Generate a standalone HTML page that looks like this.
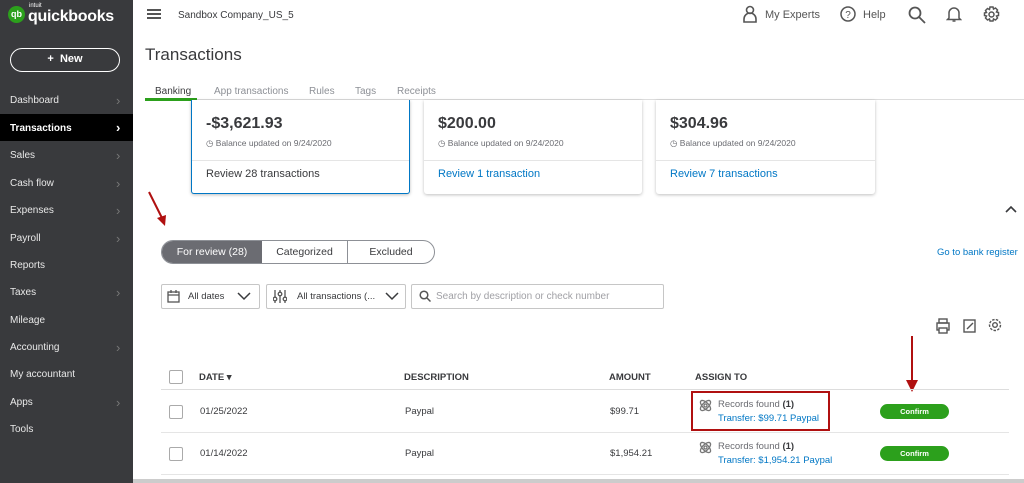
<!DOCTYPE html>
<html><head><style>
*{box-sizing:border-box;margin:0;padding:0}
body{width:1024px;height:483px;overflow:hidden;font-family:"Liberation Sans",sans-serif;background:#fff;position:relative;color:#393a3d}
.a{position:absolute}
.sb{left:0;top:0;width:133px;height:483px;background:#393a3d}
.nav{position:absolute;left:10px;font-size:10px;color:#e8e8e8}
.chev{position:absolute;left:116px;font-size:13px;color:#777;line-height:12px}
.card{position:absolute;top:100px;height:94px;background:#fff;box-shadow:0 1px 3px rgba(0,0,0,.25);border-radius:0 0 3px 3px}
.amt{position:absolute;left:14px;top:15px;font-size:16px;font-weight:bold;color:#393a3d}
.bal{position:absolute;left:14px;top:38px;font-size:8.5px;color:#6b6c72}
.rv{position:absolute;left:14px;top:68px;font-size:11px;color:#0077c5}
.dv{position:absolute;left:0;right:0;top:60px;border-top:1px solid #e5e5e5}
.th{position:absolute;top:372px;font-size:9.5px;font-weight:bold;color:#393a3d}
.cell{position:absolute;font-size:9.5px;color:#393a3d}
.cb{position:absolute;left:169px;width:14px;height:14px;border:1px solid #aaa;border-radius:2px}
.btn{position:absolute;left:880px;width:69px;height:15px;background:#2ca01c;border-radius:8px;color:#fff;font-size:7.5px;font-weight:bold;text-align:center;line-height:15px}
.lnk{color:#0077c5}
.tab{position:absolute;top:86px;font-size:10px;color:#8d9096}
</style></head><body>
<div class="a sb"></div>
<div class="a" style="left:8px;top:6px;width:17px;height:17px;border-radius:50%;background:#2ca01c;color:#fff;font-size:9px;font-weight:bold;text-align:center;line-height:17px">qb</div>
<div class="a" style="left:29px;top:3px;font-size:6px;color:#fff">intuit</div>
<div class="a" style="left:28px;top:8px;font-size:16px;font-weight:bold;color:#fff;letter-spacing:-.3px">quickbooks</div>
<div class="a" style="left:10px;top:48px;width:110px;height:24px;border:1.5px solid #fff;border-radius:12px;color:#fff;font-size:11px;font-weight:bold;text-align:center;line-height:21px">+&nbsp; New</div>
<div class="a" style="left:0;top:114px;width:133px;height:27px;background:#000"></div>
<div class="nav" style="top:95px">Dashboard</div><div class="chev" style="top:95px">›</div>
<div class="nav" style="top:123px;color:#fff;font-weight:bold">Transactions</div><div class="chev" style="top:122px;color:#fff;font-weight:bold">›</div>
<div class="nav" style="top:150px">Sales</div><div class="chev" style="top:150px">›</div>
<div class="nav" style="top:178px">Cash flow</div><div class="chev" style="top:178px">›</div>
<div class="nav" style="top:205px">Expenses</div><div class="chev" style="top:205px">›</div>
<div class="nav" style="top:233px">Payroll</div><div class="chev" style="top:233px">›</div>
<div class="nav" style="top:260px">Reports</div>
<div class="nav" style="top:287px">Taxes</div><div class="chev" style="top:287px">›</div>
<div class="nav" style="top:315px">Mileage</div>
<div class="nav" style="top:342px">Accounting</div><div class="chev" style="top:342px">›</div>
<div class="nav" style="top:369px">My accountant</div>
<div class="nav" style="top:397px">Apps</div><div class="chev" style="top:397px">›</div>
<div class="nav" style="top:424px">Tools</div>

<div class="a" style="left:147px;top:9px;width:14px;height:2px;background:#555;box-shadow:0 4px 0 #555,0 8px 0 #555"></div>
<div class="a" style="left:178px;top:10px;font-size:10px;color:#393a3d">Sandbox Company_US_5</div>
<svg class="a" style="left:742px;top:5px" width="16" height="18" viewBox="0 0 16 18" fill="none" stroke="#555" stroke-width="1.6"><circle cx="8" cy="5" r="3.5"/><path d="M2 17v-3a6 6 0 0 1 12 0v3z"/></svg>
<div class="a" style="left:765px;top:9px;font-size:11px;color:#555">My Experts</div>
<svg class="a" style="left:840px;top:6px" width="16" height="16" viewBox="0 0 16 16"><circle cx="8" cy="8" r="7" fill="none" stroke="#555" stroke-width="1.5"/><text x="8" y="12" font-size="10" text-anchor="middle" fill="#555" font-family="Liberation Sans">?</text></svg>
<div class="a" style="left:863px;top:9px;font-size:11px;color:#555">Help</div>
<svg class="a" style="left:908px;top:6px" width="18" height="18" viewBox="0 0 18 18" fill="none" stroke="#555" stroke-width="1.8"><circle cx="7" cy="7" r="5.5"/><path d="M11 11l6 6"/></svg>
<svg class="a" style="left:946px;top:5px" width="16" height="18" viewBox="0 0 16 18" fill="none" stroke="#555" stroke-width="1.5"><path d="M3 13V8a5 5 0 0 1 10 0v5l1.5 1.5h-13z"/><path d="M6.5 16h3"/></svg>
<svg class="a" style="left:983px;top:6px" width="17" height="17" viewBox="0 0 17 17" fill="none" stroke="#555" stroke-width="1.5"><circle cx="8.5" cy="8.5" r="2.5"/><path d="M7 1h3l.5 2 2-1 2 2-1 2 2 .5v3l-2 .5 1 2-2 2-2-1-.5 2H7l-.5-2-2 1-2-2 1-2-2-.5V7l2-.5-1-2 2-2 2 1z"/></svg>

<div class="a" style="left:145px;top:45px;font-size:17px;color:#393a3d">Transactions</div>
<div class="tab" style="left:155px;color:#393a3d">Banking</div>
<div class="tab" style="left:214px">App transactions</div>
<div class="tab" style="left:309px">Rules</div>
<div class="tab" style="left:355px">Tags</div>
<div class="tab" style="left:397px">Receipts</div>
<div class="a" style="left:145px;top:99px;width:879px;height:1px;background:#ddd"></div>
<div class="a" style="left:145px;top:98px;width:52px;height:3px;background:#2ca01c"></div>

<div class="card" style="left:191px;width:219px;border:1px solid #0077c5;border-top:none"><div class="amt">-$3,621.93</div><div class="bal">◷ Balance updated on 9/24/2020</div><div class="dv"></div><div class="rv" style="color:#393a3d">Review 28 transactions</div></div>
<div class="card" style="left:424px;width:218px"><div class="amt">$200.00</div><div class="bal">◷ Balance updated on 9/24/2020</div><div class="dv"></div><div class="rv">Review 1 transaction</div></div>
<div class="card" style="left:656px;width:219px"><div class="amt">$304.96</div><div class="bal">◷ Balance updated on 9/24/2020</div><div class="dv"></div><div class="rv">Review 7 transactions</div></div>
<svg class="a" style="left:1004px;top:204px" width="14" height="10" fill="none" stroke="#393a3d" stroke-width="1.6"><path d="M2 8l5-5 5 5"/></svg>

<svg class="a" style="left:146px;top:190px" width="24" height="44"><path d="M3 2L17 30" stroke="#b01010" stroke-width="2"/><path d="M11 28l8 8 1-11z" fill="#b01010"/></svg>
<div class="a" style="left:161px;top:240px;width:274px;height:24px;border:1px solid #8d9096;border-radius:12px;overflow:hidden;background:#fff">
<div class="a" style="left:0;top:0;width:100px;height:22px;background:#6b6c72;color:#fff;font-size:10.5px;text-align:center;line-height:22px">For review (28)</div>
<div class="a" style="left:100px;top:0;width:86px;height:22px;border-right:1px solid #8d9096;font-size:10.5px;text-align:center;line-height:22px">Categorized</div>
<div class="a" style="left:186px;top:0;width:86px;height:22px;font-size:10.5px;text-align:center;line-height:22px">Excluded</div></div>
<div class="a" style="left:937px;top:247px;font-size:9.5px;color:#0077c5">Go to bank register</div>

<div class="a" style="left:161px;top:284px;width:99px;height:25px;border:1px solid #c6c6c6;border-radius:2px;font-size:9.5px;line-height:23px;padding-left:26px">All dates</div>
<svg class="a" style="left:237px;top:292px" width="14" height="9" fill="none" stroke="#393a3d" stroke-width="1.5"><path d="M1 1l6 6 6-6"/></svg>
<svg class="a" style="left:167px;top:290px" width="13" height="13" fill="none" stroke="#555" stroke-width="1.3"><rect x="1" y="2" width="11" height="10"/><path d="M1 5h11M4 0v3M9 0v3"/></svg>
<div class="a" style="left:266px;top:284px;width:140px;height:25px;border:1px solid #c6c6c6;border-radius:2px;font-size:9.5px;line-height:23px;padding-left:30px">All transactions (...</div>
<svg class="a" style="left:385px;top:292px" width="14" height="9" fill="none" stroke="#393a3d" stroke-width="1.5"><path d="M1 1l6 6 6-6"/></svg>
<svg class="a" style="left:273px;top:290px" width="14" height="13" stroke="#555" stroke-width="1.3" fill="#fff"><path d="M2 0v13M7 0v13M12 0v13"/><circle cx="2" cy="9" r="1.8"/><circle cx="7" cy="4" r="1.8"/><circle cx="12" cy="9" r="1.8"/></svg>
<div class="a" style="left:411px;top:284px;width:253px;height:25px;border:1px solid #c6c6c6;border-radius:2px;font-size:10px;line-height:23px;padding-left:24px;color:#a0a0a5">Search by description or check number</div>
<svg class="a" style="left:419px;top:290px" width="12" height="12" fill="none" stroke="#555" stroke-width="1.5"><circle cx="5" cy="5" r="3.8"/><path d="M8 8l3.5 3.5"/></svg>

<svg class="a" style="left:934px;top:318px" width="70" height="16" fill="none" stroke="#555" stroke-width="1.4"><rect x="3" y="5" width="12" height="7"/><rect x="5" y="1" width="8" height="4"/><rect x="5" y="10" width="8" height="5" fill="#fff"/><rect x="30" y="2" width="11" height="12"/><path d="M33 11l6-6"/><circle cx="61" cy="7" r="2.3"/><circle cx="61" cy="7" r="5.5" stroke-dasharray="2.5 1.3"/></svg>

<svg class="a" style="left:902px;top:336px" width="20" height="60"><path d="M10 0v46" stroke="#b01010" stroke-width="2"/><path d="M4 44h12l-6 12z" fill="#b01010"/></svg>

<div class="cb" style="top:370px"></div>
<div class="th" style="left:199px">DATE ▾</div>
<div class="th" style="left:404px">DESCRIPTION</div>
<div class="th" style="left:609px">AMOUNT</div>
<div class="th" style="left:695px">ASSIGN TO</div>
<div class="a" style="left:161px;top:389px;width:848px;height:1px;background:#ddd"></div>

<div class="cb" style="top:405px"></div>
<div class="cell" style="left:200px;top:406px">01/25/2022</div>
<div class="cell" style="left:405px;top:406px">Paypal</div>
<div class="cell" style="left:610px;top:406px">$99.71</div>
<div class="a" style="left:691px;top:391px;width:139px;height:40px;border:2px solid #b01010"></div>
<svg class="a" style="left:698px;top:398px" width="15" height="15" fill="none" stroke="#777" stroke-width="1.3"><ellipse cx="7.5" cy="7.5" rx="6.5" ry="3" transform="rotate(45 7.5 7.5)"/><ellipse cx="7.5" cy="7.5" rx="6.5" ry="3" transform="rotate(-45 7.5 7.5)"/><circle cx="7.5" cy="7.5" r="1.5"/></svg>
<div class="cell" style="left:718px;top:399px;color:#6b6c72">Records found <b style="color:#393a3d">(1)</b></div>
<div class="cell lnk" style="left:718px;top:413px">Transfer: $99.71 Paypal</div>
<div class="btn" style="top:404px">Confirm</div>
<div class="a" style="left:161px;top:432px;width:848px;height:1px;background:#e5e5e5"></div>

<div class="cb" style="top:447px"></div>
<div class="cell" style="left:200px;top:448px">01/14/2022</div>
<div class="cell" style="left:405px;top:448px">Paypal</div>
<div class="cell" style="left:610px;top:448px">$1,954.21</div>
<svg class="a" style="left:698px;top:440px" width="15" height="15" fill="none" stroke="#777" stroke-width="1.3"><ellipse cx="7.5" cy="7.5" rx="6.5" ry="3" transform="rotate(45 7.5 7.5)"/><ellipse cx="7.5" cy="7.5" rx="6.5" ry="3" transform="rotate(-45 7.5 7.5)"/><circle cx="7.5" cy="7.5" r="1.5"/></svg>
<div class="cell" style="left:718px;top:441px;color:#6b6c72">Records found <b style="color:#393a3d">(1)</b></div>
<div class="cell lnk" style="left:718px;top:455px">Transfer: $1,954.21 Paypal</div>
<div class="btn" style="top:446px">Confirm</div>
<div class="a" style="left:161px;top:474px;width:848px;height:1px;background:#e5e5e5"></div>
<div class="a" style="left:133px;top:479px;width:891px;height:4px;background:#ccc"></div>
</body></html>
